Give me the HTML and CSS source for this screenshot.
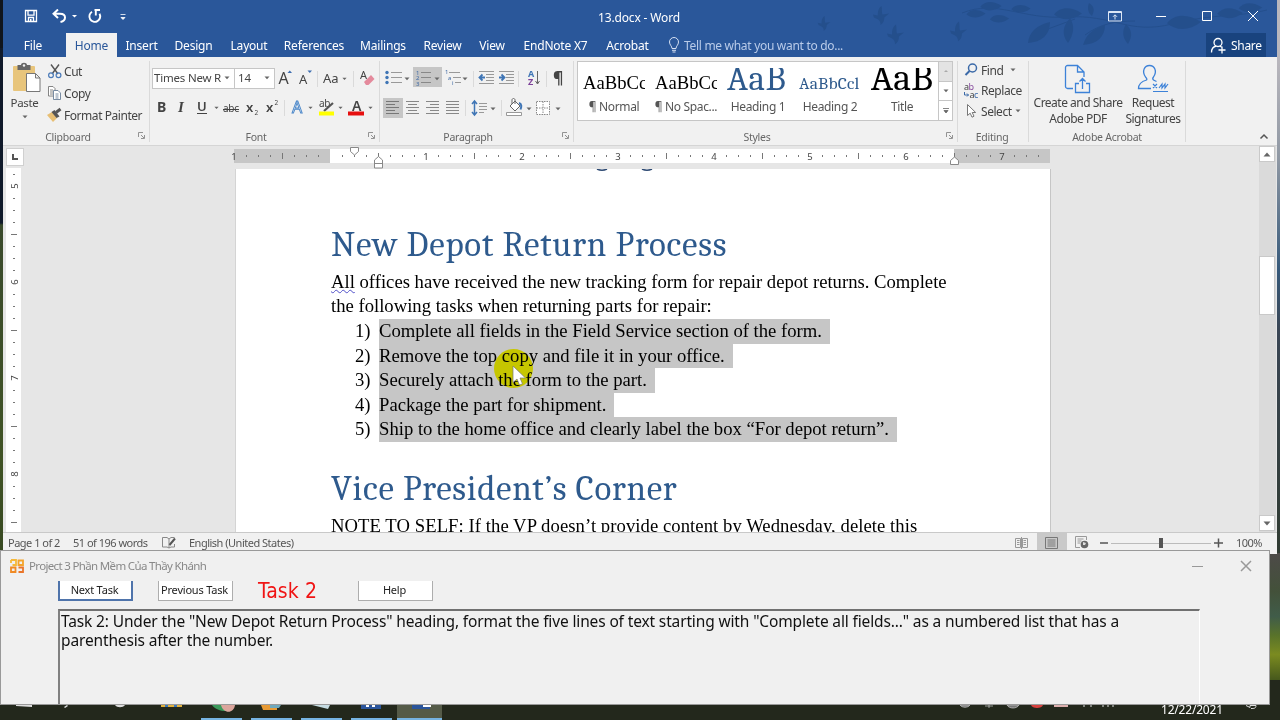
FILE: index.html
```html
<!DOCTYPE html>
<html lang="en">
<head>
  <meta charset="UTF-8">
  <title>13.docx - Word</title>
  <meta name="viewport" content="width=device-width, initial-scale=1">
  <link rel="stylesheet" href="styles.css">
</head>
<body>
  <!-- shared symbols -->
  <svg class="defs" width="0" height="0">
    <symbol id="caret" viewBox="0 0 6 4"><path d="M0.5 0.5h5L3 3.3z" fill="#666"/></symbol>
    <symbol id="launcher" viewBox="0 0 8 8"><path d="M1.500 6V1.500H6M4 4l3 3M7.500 4v3.500H4" fill="none" stroke="#888" stroke-width=".9"/></symbol>
    <symbol id="leaf" viewBox="0 0 30 14"><path d="M0 8C6 0 18-1 30 7C20 15 8 15 0 8z"/></symbol>
    <symbol id="bird" viewBox="0 0 20 20"><path d="M1 9l5 1c0-5 1-8 4-10c1 4 0 6 1 9l7-1-5 4c0 3-1 6-4 8c0-3-1-5-3-6l-4-2z"/></symbol>
  </svg>

  <div class="desktop">
    <div class="edge edge-left"></div>
    <div class="edge edge-right"></div>
    <div class="garden"></div>

    <div class="word">
      <header class="top">
        <svg class="branches" width="480" height="57" viewBox="0 0 480 57">
          <g fill="#214b86">
            <use href="#bird" x="20" y="14" width="15" height="19"/>
            <use href="#bird" x="75" y="4" width="19" height="23"/>
            <use href="#bird" x="89" y="23" width="20" height="23"/>
            <use href="#bird" x="152" y="18" width="20" height="27"/>
            <use href="#leaf" x="168" y="9" width="22" height="9"/>
            <use href="#leaf" x="182" y="1" width="24" height="10"/>
            <use href="#leaf" x="190" y="14" width="25" height="9"/>
            <use href="#leaf" x="212" y="4" width="24" height="9"/>
            <use href="#leaf" x="255" y="7" width="32" height="13"/>
            <use href="#leaf" x="370" y="14" width="34" height="16"/>
            <use href="#leaf" x="418" y="7" width="30" height="12"/>
            <use href="#leaf" x="440" y="2" width="27" height="11"/>
            <path d="M253 22c-13 3-21 10-22 21c14-1 22-8 22-21zM273 18c-7 8-9 16-2 25c6-9 7-17 2-25zM308 25c-13 4-19 10-22 20c14-1 22-8 22-20zM329 24c-4 7-4 13 2 20c5-8 4-14-2-20zM292 3c-2 5-1 10 3 13c3-6 2-10-3-13z"/>
          </g>
          <path d="M165 13c35-14 60 7 105 4s62 18 105 7s62-6 95-14M240 33l38-14M288 35c15-11 30-14 50-14" fill="none" stroke="#214b86"/>
        </svg>
        <div class="titlebar">
          <div class="quick">
            <svg width="26" height="16" viewBox="0 0 26 16"><path d="M2.500 1.500h11v11h-11zM5 1.500v4.700h6V1.500M5.500 12.500v-4h5v4" fill="none" stroke="#fff" stroke-width="1.300"/><path d="M7 10h1.500v2.500H7z" fill="#fff"/></svg>
            <svg width="36" height="16" viewBox="0 0 36 16"><path d="M8 .5L3.500 4.800L8 9M4 4.800h6c3 0 5 1.500 5 3.800c0 2.500-1.700 3.900-4.500 4.500" fill="none" stroke="#fff" stroke-width="2"/><path d="M22 6h5l-2.500 2.600z" fill="#fff"/></svg>
            <svg width="30" height="16" viewBox="0 0 30 16"><path d="M6 2.800a5.400 5.400 0 1 0 7.500 2M8.500 1H14M9.800 1.500v5" fill="none" stroke="#fff" stroke-width="1.900"/></svg>
            <svg width="12" height="16" viewBox="0 0 12 16"><path d="M4.500 5.500h5M5 8.500h4L7 10.500z" stroke="#fff" stroke-width=".8" fill="#fff"/></svg>
          </div>
          <div class="title">13.docx - Word</div>
          <div class="controls">
            <svg width="14" height="12" viewBox="0 0 14 12"><path d="M.5 .5h13v9.500H.5zM.5 1.500h13M7 8.500V4M5 5.800l2-2 2 2" fill="none" stroke="#dce6f5"/></svg>
            <svg width="12" height="12" viewBox="0 0 12 12"><path d="M1 5.500h10" stroke="#fff"/></svg>
            <svg width="12" height="12" viewBox="0 0 12 12"><path d="M1.500 .5h9v9h-9z" fill="none" stroke="#fff"/></svg>
            <svg width="12" height="12" viewBox="0 0 12 12"><path d="M1 0l10 10M11 0L1 10" stroke="#fff"/></svg>
          </div>
        </div>
        <nav class="tabs">
          <span class="tab file">File</span>
          <span class="tab active">Home</span>
          <span class="tab t-insert">Insert</span>
          <span class="tab t-design">Design</span>
          <span class="tab t-layout">Layout</span>
          <span class="tab t-references">References</span>
          <span class="tab t-mailings">Mailings</span>
          <span class="tab t-review">Review</span>
          <span class="tab t-view">View</span>
          <span class="tab t-endnote">EndNote X7</span>
          <span class="tab t-acrobat">Acrobat</span>
          <span class="tell"><svg width="12" height="16" viewBox="0 0 12 16"><path d="M4 11.500C4 9 1.500 8 1.500 5a4.500 4.500 0 0 1 9 0c0 3-2.500 4-2.500 6.500zM4 13.300h4M4.500 15h3" fill="none" stroke="#d5e0f2"/></svg>Tell me what you want to do...</span>
          <span class="share"><svg width="17" height="17" viewBox="0 0 17 17"><circle cx="8" cy="5.500" r="4" fill="none" stroke="#fff" stroke-width="1.300"/><path d="M1.500 15.500c0-4 2-6 5-6.500M9.500 9c1 .2 1.500.6 2 1.200M12 9.500v7M8.500 13h7" fill="none" stroke="#fff" stroke-width="1.300"/></svg>Share</span>
        </nav>
      </header>

      <section class="ribbon">
        <div class="group clipboard">
          <div class="tools clip-tools">
            <div class="paste">
              <svg width="30" height="33" viewBox="0 0 30 33"><rect x="1" y="4" width="22" height="25" rx="1" fill="#e8c57c"/><path d="M5.500 3h3.500c0-3 6-3 6 0h3.500v5h-13z" fill="#666"/><circle cx="12" cy="3.500" r="1.200" fill="#f1f1f1"/><path d="M14.500 11.500h9l4.500 4.500v13.500H14.500zM23.500 11.500V16H28" fill="#fff" stroke="#777"/></svg>
              <span>Paste</span>
              <svg width="6" height="4"><use href="#caret" width="6" height="4"/></svg>
            </div>
            <div class="clip-list">
              <div class="item"><svg width="17" height="16" viewBox="0 0 17 16"><path d="M4 1.500L11 11M12 1.500L5 11" stroke="#555" stroke-width="1.400"/><circle cx="4" cy="12.300" r="2.400" fill="none" stroke="#4a7ab8" stroke-width="1.200"/><circle cx="11.500" cy="12.300" r="2.400" fill="none" stroke="#4a7ab8" stroke-width="1.200"/></svg>Cut</div>
              <div class="item"><svg width="17" height="16" viewBox="0 0 17 16"><path d="M1.500 1.500H6L8 3.500v7.500H1.500zM3 5h3M3 7h3M3 9h3" fill="#fff" stroke="#777" stroke-width=".9"/><path d="M6.500 5.500H11L13.500 8v6.500h-7zM8.500 9h3M8.500 11h3M8.500 13h3" fill="#fff" stroke="#6a7f99" stroke-width=".9"/></svg>Copy</div>
              <div class="item"><svg width="17" height="16" viewBox="0 0 17 16"><path d="M0 8l5-3 5 6-4 4z" fill="#e8bf74"/><path d="M4.500 5l3-2 5 6.500-3 1.500z" fill="#555"/><path d="M9 5.500L13.500 2" stroke="#555" stroke-width="3"/></svg>Format Painter</div>
            </div>
          </div>
          <div class="label"><span>Clipboard</span><svg width="8" height="8"><use href="#launcher"/></svg></div>
        </div>

        <div class="group font">
          <div class="tools">
            <div class="row">
              <div class="combo face">Times New R<svg width="6" height="4"><use href="#caret"/></svg></div>
              <div class="combo size">14<svg width="6" height="4"><use href="#caret"/></svg></div>
              <svg class="tool" width="22" height="24"><text x="3.500" y="17" class="glyph g15">A</text><path d="M12.500 6h4.500l-2.200-2.500z" fill="#3d6db0"/></svg>
              <svg class="tool" width="20" height="24"><text x="2" y="17" class="glyph g13">A</text><path d="M10.500 3.500H15l-2.200 2.500z" fill="#3d6db0"/></svg>
              <svg class="tool" width="40" height="24"><path d="M.5 4v16M36.500 4v16" stroke="#dadada"/><text x="6" y="16" class="glyph g13">Aa</text><use href="#caret" x="25" y="10" width="5" height="4"/></svg>
              <svg class="tool" width="20" height="24"><text x="3" y="12" class="glyph g12">A</text><path d="M7 15l7-7 3.500 4-6 6h-2.500z" fill="#e48a9c"/></svg>
            </div>
            <div class="row">
              <svg class="tool" width="21" height="24"><text x="5" y="16" class="glyph g14 bold">B</text></svg>
              <svg class="tool" width="20" height="24"><text x="5" y="16" class="glyph serif-italic">I</text></svg>
              <svg class="tool" width="29" height="24"><text x="4" y="15" class="glyph g13 heavy">U</text><path d="M4 17.500h10" stroke="#444"/><use href="#caret" x="21" y="10" width="5" height="4"/></svg>
              <svg class="tool" width="22" height="24"><text x="1" y="16" class="glyph g10">abc</text><path d="M1 13.500h16" stroke="#444"/></svg>
              <svg class="tool" width="20" height="24"><text x="2" y="16" class="glyph g13 heavy">x</text><text x="10.500" y="19" class="glyph tiny">2</text></svg>
              <svg class="tool" width="24" height="24"><text x="2" y="16" class="glyph g13 heavy">x</text><text x="10.500" y="9" class="glyph tiny">2</text><path d="M20.500 4v16" stroke="#dadada"/></svg>
              <svg class="tool" width="29" height="24"><text x="4" y="17" class="outline">A</text><use href="#caret" x="20" y="10" width="5" height="4"/></svg>
              <svg class="tool" width="29" height="24"><text x="2" y="11" class="glyph g10">ab</text><path d="M7 15l9-8" stroke="#555" stroke-width="2.200"/><path d="M2 15.500h15v4H2z" fill="#ff0"/><use href="#caret" x="21" y="10" width="5" height="4"/></svg>
              <svg class="tool" width="30" height="24"><text x="6" y="15" class="glyph g14 heavy">A</text><path d="M2 15.500h16v4H2z" fill="#e60f0f"/><use href="#caret" x="22" y="10" width="5" height="4"/></svg>
            </div>
          </div>
          <div class="label"><span>Font</span><svg width="8" height="8"><use href="#launcher"/></svg></div>
        </div>

        <div class="group paragraph">
          <div class="tools">
            <div class="row">
              <svg class="tool" width="29" height="24"><path d="M7 5.500h11M7 10.500h11M7 15.500h11" stroke="#999"/><g fill="#3f75b5"><circle cx="3" cy="5.500" r="1.700"/><circle cx="3" cy="10.500" r="1.700"/><circle cx="3" cy="15.500" r="1.700"/></g><use href="#caret" x="20" y="10" width="6" height="4"/></svg>
              <svg class="tool" width="31" height="24"><path d="M0 0h29v20H0z" fill="#c6c6c6"/><path d="M8 5.500h10M8 10.500h10M8 15.500h10" stroke="#888"/><text x="3" y="7.500" class="num">1</text><text x="3" y="13" class="num">2</text><text x="3" y="18.500" class="num">3</text><use href="#caret" x="21" y="10" width="6" height="4"/></svg>
              <svg class="tool" width="32" height="24"><path d="M5 5.500h11M9 10.500h8M11 15.500h6" stroke="#999"/><text x="1" y="7" class="num">1</text><text x="4" y="12.500" class="num">a</text><text x="8" y="18" class="num">i</text><use href="#caret" x="18" y="10" width="6" height="4"/><path d="M29.500 4v16" stroke="#dadada"/></svg>
              <svg class="tool" width="20" height="24"><path d="M3 4.500h15M10 7.500h8M10 10.500h8M10 13.500h8M3 16.500h15" stroke="#999"/><path d="M9 10.500H4M6.500 7.500l-3 3 3 3" stroke="#3f75b5" stroke-width="1.800" fill="none"/></svg>
              <svg class="tool" width="27" height="24"><path d="M3 4.500h15M10 7.500h8M10 10.500h8M10 13.500h8M3 16.500h15" stroke="#999"/><path d="M3 10.500h5M5.500 7.500l3 3-3 3" stroke="#3f75b5" stroke-width="1.800" fill="none"/><path d="M22.500 4v16" stroke="#dadada"/></svg>
              <svg class="tool" width="26" height="24"><text x="5" y="10" class="sort-a">A</text><text x="5" y="18" class="sort-z">Z</text><path d="M14.500 4v13M12.500 14l2 3 2-3" stroke="#666" fill="none"/><path d="M23.500 4v16" stroke="#dadada"/></svg>
              <svg class="tool" width="20" height="24"><text x="4" y="16" class="glyph g15 bold">¶</text></svg>
            </div>
            <div class="row">
              <svg class="tool" width="21" height="24"><path d="M0 2h20v20H0z" fill="#c6c6c6"/><path d="M3 5.500h13M3 8.500h9M3 11.500h13M3 14.500h9M3 17.500h13" stroke="#777"/></svg>
              <svg class="tool" width="20" height="24"><path d="M2 5.500h13M4 8.500h9M2 11.500h13M4 14.500h9M2 17.500h13" stroke="#888"/></svg>
              <svg class="tool" width="20" height="24"><path d="M2 5.500h13M6 8.500h9M2 11.500h13M6 14.500h9M2 17.500h13" stroke="#888"/></svg>
              <svg class="tool" width="26" height="24"><path d="M2 5.500h13M2 8.500h13M2 11.500h13M2 14.500h13M2 17.500h13" stroke="#888"/><path d="M21.500 4v16" stroke="#dadada"/></svg>
              <svg class="tool" width="36" height="24"><path d="M4.500 6v12M2 8l2.500-3L7 8M2 16l2.500 3L7 16" stroke="#3f75b5" stroke-width="1.500" fill="none"/><path d="M9 7.500h8M9 10.500h8M9 13.500h8M9 16.500h5" stroke="#999"/><use href="#caret" x="20" y="11" width="6" height="4"/><path d="M31.500 4v16" stroke="#dadada"/></svg>
              <svg class="tool" width="30" height="24"><path d="M4 10l5-5 5 5-5 5zM6 8V4c0-2 3-2 3 0v4" fill="#fff" stroke="#666"/><path d="M13 7c3 1 2.500 4 1.500 6.500" stroke="#3f75b5" stroke-width="2" fill="none"/><path d="M.5 16.500h15v3h-15z" fill="#fff" stroke="#999"/><use href="#caret" x="20" y="11" width="6" height="4"/></svg>
              <svg class="tool" width="30" height="24"><path d="M.5 5.500h13v13H.5zM7 5.500v13M.5 12h13" fill="#fff" stroke="#888" stroke-dasharray="1.500 1"/><use href="#caret" x="19" y="11" width="6" height="4"/></svg>
            </div>
          </div>
          <div class="label"><span>Paragraph</span><svg width="8" height="8"><use href="#launcher"/></svg></div>
        </div>

        <div class="group styles">
          <div class="gallery">
            <div class="style"><span class="sample times">AaBbCc</span><span>¶ Normal</span></div>
            <div class="style"><span class="sample times">AaBbCc</span><span>¶ No Spac...</span></div>
            <div class="style"><span class="sample h1s">AaB</span><span>Heading 1</span></div>
            <div class="style"><span class="sample h2s">AaBbCcl</span><span>Heading 2</span></div>
            <div class="style"><span class="sample titles">AaB</span><span>Title</span></div>
            <div class="scroller">
              <span class="off"><svg width="6" height="4" viewBox="0 0 6 4"><path d="M1 3h4L3 1z" fill="#aaa"/></svg></span>
              <span><svg width="6" height="4"><use href="#caret"/></svg></span>
              <span><svg width="6" height="6" viewBox="0 0 6 6"><path d="M0 .5h6M1 2.500h4L3 5z" stroke="#666" stroke-width=".8" fill="#666"/></svg></span>
            </div>
          </div>
          <div class="label"><span>Styles</span><svg width="8" height="8"><use href="#launcher"/></svg></div>
        </div>

        <div class="group editing">
          <div class="tools edit-list">
            <div class="item"><svg width="17" height="16" viewBox="0 0 17 16"><circle cx="8.500" cy="6" r="4" fill="none" stroke="#3b6aa8" stroke-width="1.500"/><path d="M5.500 9L1.500 13" stroke="#3b6aa8" stroke-width="2"/></svg>Find<svg class="drop" width="6" height="4"><use href="#caret"/></svg></div>
            <div class="item"><svg width="17" height="16" viewBox="0 0 17 16"><text x="0" y="7" class="ab">a<tspan fill="#8a4fa0">b</tspan></text><text x="5.500" y="14.500" class="ab">a<tspan fill="#3b6aa8">c</tspan></text><path d="M.5 9v3h4M3 10.500l1.500 1.500L3 13.500" fill="none" stroke="#3b6aa8"/></svg>Replace</div>
            <div class="item"><svg width="17" height="16" viewBox="0 0 17 16"><path d="M3.500 1.500v11l2.700-2.300 1.800 4 2-1-1.800-3.700h3.500z" fill="#fff" stroke="#777"/></svg>Select<svg class="drop near" width="6" height="4"><use href="#caret"/></svg></div>
          </div>
          <div class="label"><span>Editing</span></div>
        </div>

        <div class="group acrobat">
          <div class="tools adobe">
            <div class="big create"><svg width="28" height="30" viewBox="0 0 28 30"><path d="M9 24.500H3.500c-1 0-2-1-2-2v-19c0-1 1-2 2-2h10L20 8v5M13.500 1.500V8H20" fill="none" stroke="#3d82d8" stroke-width="1.300"/><path d="M15 19.500h-3.500v9h14v-9H22M18.500 25V14.500M15.500 17.500l3-3 3 3" fill="none" stroke="#3d82d8" stroke-width="1.300"/></svg><span>Create and Share<br>Adobe PDF</span></div>
            <div class="big request"><svg width="32" height="30" viewBox="0 0 32 30"><path d="M14 24.500H1.500c0-5 3-7 8-8.500c1-1 0-2-1-3c-4-6-1-11.500 4-11.500s8 5.500 4 11.500c-1 1-1 2 0 3l3 1.500" fill="none" stroke="#3d82d8" stroke-width="1.300"/><path d="M16 20l4 4M20 20l-4 4M22 24l3-4v4l3-4v4l3-4M16 27.500h15" fill="none" stroke="#3d82d8" stroke-width="1.200"/></svg><span>Request<br>Signatures</span></div>
          </div>
          <div class="label"><span>Adobe Acrobat</span></div>
        </div>
        <svg class="collapse" width="10" height="7" viewBox="0 0 10 7"><path d="M1.500 5.500L5 2l3.500 3.500" fill="none" stroke="#555" stroke-width="1.500"/></svg>
      </section>

      <main class="workspace">
        <div class="left-rail">
          <div class="tabstop"><svg width="8" height="8" viewBox="0 0 8 8"><path d="M2 1v5h5" fill="none" stroke="#555" stroke-width="2"/></svg></div>
          <svg class="vruler" width="15" height="364" viewBox="0 168 15 364">
            <defs><pattern id="vticks" width="15" height="96" y="186" patternUnits="userSpaceOnUse"><path d="M7 12.500h2M7 24.500h2M7 36.500h2M5 48.500h6M7 60.500h2M7 72.500h2M7 84.500h2" stroke="#777"/></pattern></defs>
            <rect y="168" width="15" height="364" fill="url(#vticks)"/>
            <g class="rulenum">
              <text transform="translate(12 186) rotate(-90)">5</text>
              <text transform="translate(12 282) rotate(-90)">6</text>
              <text transform="translate(12 378) rotate(-90)">7</text>
              <text transform="translate(12 474) rotate(-90)">8</text>
            </g>
          </svg>
        </div>
        <div class="canvas">
          <svg class="hruler" width="820" height="23" viewBox="232 146 820 23">
            <defs><pattern id="hticks" width="96" height="23" x="234" y="146" patternUnits="userSpaceOnUse"><path d="M12.500 9v2M24.500 9v2M36.500 9v2M48.500 7v6M60.500 9v2M72.500 9v2M84.500 9v2" stroke="#777"/></pattern></defs>
            <path d="M234 149h816v14H234z" fill="#c6c6c6"/>
            <path d="M330 149h624v14H330z" fill="#fff"/>
            <rect x="234" y="146" width="816" height="23" fill="url(#hticks)"/>
            <g class="rulenum">
              <text x="234" y="160">1</text><text x="426" y="160">1</text><text x="522" y="160">2</text><text x="618" y="160">3</text><text x="714" y="160">4</text><text x="810" y="160">5</text><text x="906" y="160">6</text><text x="1002" y="160">7</text>
            </g>
            <path d="M350.500 147.500h8v4l-4 3.500-4-3.500zM374.500 168v-8l4-3.500 4 3.500v8zM374.500 163.500h8M950.500 164.500v-4l4-3.500 4 3.500v4z" fill="#fff" stroke="#888"/>
          </svg>
          <article class="page">
            <!-- descenders of the heading scrolled off the top -->
            <svg class="cutoff" width="80" height="3" viewBox="0 0 80 3"><path d="M1 0c3 1.500 7 1.500 10 0M46 0c3 1.500 7 1.500 10 0" fill="none" stroke="#2e4a73" stroke-width="1.500"/></svg>
            <h1 class="h-depot">New Depot Return Process</h1>
            <p><span class="grammar">All</span> offices have received the new tracking form for repair depot returns. Complete<br>the following tasks when returning parts for repair:</p>
            <ol>
              <li><span>Complete all fields in the Field Service section of the form.</span></li>
              <li><span>Remove the top copy and file it in your office.</span></li>
              <li><span>Securely attach the form to the part.</span></li>
              <li><span>Package the part for shipment.</span></li>
              <li><span>Ship to the home office and clearly label the box “For depot return”.</span></li>
            </ol>
            <h1 class="h-vice">Vice President’s Corner</h1>
            <p class="note-self">NOTE TO SELF: If the VP doesn’t provide content by Wednesday, delete this</p>
          </article>
        </div>
        <div class="scrollbar">
          <span class="arrow"><svg width="8" height="5" viewBox="0 0 8 5"><path d="M.5 4.500h7L4 .5z" fill="#666"/></svg></span>
          <span class="thumb"></span>
          <span class="arrow last"><svg width="8" height="5" viewBox="0 0 8 5"><path d="M.5.5h7L4 4.500z" fill="#666"/></svg></span>
        </div>
      </main>

      <footer class="status">
        <span class="s-page">Page 1 of 2</span>
        <span class="s-words">51 of 196 words</span>
        <svg class="s-proof" width="15" height="13" viewBox="0 0 15 13"><path d="M.5 1.500H5L7 3v9l-2-1H.5zM7 3l2-1.500h3.500M7 12l2-1h3.500V8" fill="none" stroke="#888"/><path d="M7.500 9L13 2.500" stroke="#555" stroke-width="2"/></svg>
        <span class="s-lang">English (United States)</span>
        <div class="views">
          <span class="view"><svg width="13" height="12" viewBox="0 0 13 12"><path d="M.5 1.500h5v9h-5zM7.500 1.500h5v9h-5zM6.500 0v12M2 3.500h2.500M2 5.500h2.500M2 7.500h2.500M8.500 3.500H11M8.500 5.500H11M8.500 7.500H11" fill="none" stroke="#999"/></svg></span>
          <span class="view on"><svg width="13" height="12" viewBox="0 0 13 12"><path d="M.5.5h12v11H.5zM2.500 3h8M2.500 5h8M2.500 7h8M2.500 9h8" fill="none" stroke="#777"/></svg></span>
          <span class="view"><svg width="14" height="13" viewBox="0 0 14 13"><path d="M11.500 4V.5H.5v11H5M2.500 3h6M2.500 5h4M2.500 7h3" fill="none" stroke="#999"/><circle cx="9.500" cy="8.500" r="3.800" fill="#666"/><path d="M8 6l3 1-1 2-2 0zM10 10l2-1" fill="#ddd"/></svg></span>
        </div>
        <svg class="zoom" width="124" height="12" viewBox="0 0 124 12"><path d="M0 6h8M114 6h9M118.500 1.500v9" stroke="#555" stroke-width="1.500"/><path d="M11 6.500h100" stroke="#bbb"/><path d="M59 1h4v10h-4z" fill="#555"/></svg>
        <span class="s-zoom">100%</span>
      </footer>
    </div>

    <div class="taskwin">
      <div class="tw-title">
        <svg width="16" height="16" viewBox="0 0 16 16"><g fill="none" stroke-width="1.800"><path d="M2 2h5v5H3.500M2 2v3" stroke="#f5b93a"/><path d="M9.500 2.500H14V7H9.500z" stroke="#f3a42c"/><path d="M2 9.500h4.500V14H2z" stroke="#f08a24"/><path d="M9.500 9.500H14V14H9.500" stroke="#e9752a"/></g></svg>
        <span>Project 3 Phần Mềm Của Thầy Khánh</span>
        <svg class="tw-controls" width="60" height="14" viewBox="0 0 60 14"><path d="M0 7.500h11" stroke="#999"/><path d="M49 2l10 10M59 2L49 12" stroke="#999" stroke-width="1.500"/></svg>
      </div>
      <div class="tw-buttons">
        <button class="primary">Next Task</button>
        <button>Previous Task</button>
        <span class="task-no">Task 2</span>
        <button>Help</button>
      </div>
      <div class="tw-text">Task 2: Under the "New Depot Return Process" heading, format the five lines of text starting with "Complete all fields..." as a numbered list that has a<br>parenthesis after the number.</div>
    </div>

    <div class="taskbar">
      <svg width="1150" height="15" viewBox="0 705 1150 15">
        <path d="M397 705h45v15h-45z" fill="#555b48"/>
        <path d="M16 705h16v2l-16-1zM64 707l3-2 1 1-3 2zM115 705h10c-2 3-8 3-10 0z" fill="#ddd"/>
        <path d="M161 705h21v2h-21z" fill="#e2b23d"/><path d="M165 705h3v2h-3zM174 705h3v2h-3z" fill="#3d78b8"/>
        <path d="M212 705h12l2 6c-6 0-11-2-14-6z" fill="#3c9a5c"/><path d="M221 705h14c-1 9-12 9-14 0z" fill="#dba69d"/>
        <path d="M261 705h16v5h-14z" fill="#e79a34"/><path d="M270 705h11l-2 3h-9z" fill="#6fa9bd"/>
        <path d="M312 705h18l-2 4z" fill="#c6dce2"/><path d="M361 705h20v4h-20zM412 705h18v4h-18z" fill="#2b559b"/><path d="M366 705h3v2h-3zM372 705h3v2h-3zM423 705h8v2h-8z" fill="#fff"/>
        <path d="M201 718h41v2h-41zM251 718h41v2h-41zM301 718h41v2h-41zM351 718h41v2h-41zM397 718h45v2h-45z" fill="#76b4e3"/>
        <path d="M960 705h10c-2 3-8 3-10 0zM985 706h8M989 705v3M1007 705h12c-2 4-10 4-12 0z" fill="#777" stroke="#ccc" stroke-width=".7"/>
        <path d="M1031 705h12c-1 4-11 4-12 0z" fill="#d8423f"/><path d="M1054 705h14v2h-14z" fill="#ddb0ae"/>
        <path d="M1083 706h2M1090 706h2M1103 705v2M1108 705v2M1113 705v2" stroke="#ddd"/>
      </svg>
      <span class="date">12/22/2021</span>
      <svg class="note" width="14" height="5" viewBox="0 0 14 5"><path d="M1 .5l4 2v-2h6c0 3-2 3-5 3" fill="none" stroke="#ddd"/></svg>
    </div>

    <!-- pointer with its highlight spot -->
    <div class="spot"></div>
    <svg class="pointer" width="16" height="22" viewBox="0 0 16 22"><path d="M1 1v16.500l4-3.500 2.500 6 3-1.200-2.500-5.800h5.500z" fill="#fff" stroke="#777" stroke-width=".7"/></svg>
  </div>
</body>
</html>
```
FILE: styles.css
```css
* {
  box-sizing: border-box;
}

body {
  margin: 0;
  width: 1280px;
  height: 720px;
  overflow: hidden;
  font-family: "Noto Sans", "Open Sans", sans-serif;
  font-size: 12px;
  color: #444;
}

svg {
  display: block;
  flex: none;
}

.defs {
  position: absolute;
}

.desktop {
  position: relative;
  width: 1280px;
  height: 720px;
  overflow: hidden;
  background: #23281c;
}

.edge {
  position: absolute;
  top: 0;
  width: 4px;
  height: 680px;
}

.edge-left {
  left: 0;
  background: linear-gradient(#10151c 0 48px, #101a2a 48px 223px, #3a4a2c 225px, #405325 460px, #2c3b1c);
}

.edge-right {
  right: 0;
  background: linear-gradient(#b9b7bd 0 60px, #8e97a3 160px, #36597a 270px, #3a4655 330px, #303b32 550px);
}

.garden {
  position: absolute;
  left: 1270px;
  top: 553px;
  width: 10px;
  height: 127px;
  background: linear-gradient(#4d4a48, #43513a 30%, #405c49 50%, #59732a 65%, #7b8b20 80%, #46581c);
}

/* word window */
.word {
  position: absolute;
  left: 3px;
  top: 0;
  width: 1274px;
  height: 554px;
  display: flex;
  flex-direction: column;
  background: #e6e6e6;
}

.top {
  position: relative;
  height: 57px;
  background: #2a579a;
  color: #fff;
}

.branches {
  position: absolute;
  right: 0;
  top: 0;
  opacity: .65;
}

.titlebar {
  position: relative;
  display: flex;
  align-items: center;
  height: 33px;
}

.quick {
  display: flex;
  width: 460px;
  padding-left: 20px;
}

.quick svg:nth-child(2) {
  margin-left: 1px;
}

.title {
  width: 352px;
  text-align: center;
  padding-top: 2px;
  letter-spacing: -.15px;
}

.controls {
  display: flex;
  align-items: center;
  gap: 34px;
  margin-left: auto;
  padding-right: 18px;
}

.controls svg:first-child {
  margin-right: -1px;
}

.tabs {
  position: relative;
  display: flex;
  height: 24px;
  line-height: 25px;
}

.tab {
  flex: none;
  height: 24px;
  text-align: center;
  letter-spacing: -.2px;
}

.file {
  width: 60px;
}

.active {
  width: 51px;
  margin-left: 3px;
  background: #f1f1f1;
  color: #2a579a;
}

.t-insert { width: 49px; }
.t-design { width: 55px; }
.t-layout { width: 56px; }
.t-references { width: 74px; }
.t-mailings { width: 64px; }
.t-review { width: 55px; }
.t-view { width: 44px; }
.t-endnote { width: 83px; }
.t-acrobat { width: 61px; }

.tell {
  display: flex;
  align-items: center;
  gap: 4px;
  margin-left: 10px;
  color: #b9cbe9;
  letter-spacing: -.3px;
}

.share {
  display: flex;
  align-items: center;
  gap: 4px;
  width: 60px;
  margin-left: auto;
  margin-right: 11px;
  padding-left: 4px;
  background: #19437e;
  letter-spacing: -.3px;
}

/* ribbon */
.ribbon {
  display: flex;
  height: 89px;
  padding-top: 4px;
  background: #f1f1f1;
  border-bottom: 1px solid #d5d5d5;
}

.group {
  display: flex;
  flex-direction: column;
  height: 81px;
  border-right: 1px solid #dadada;
}

.clipboard { width: 147px; }
.font { width: 230px; }
.paragraph { width: 194px; }
.styles { width: 384px; }
.editing { width: 71px; }
.acrobat { width: 157px; }

.tools {
  height: 67px;
}

.label {
  display: flex;
  align-items: center;
  height: 14px;
  padding-right: 4px;
  font-size: 10.5px;
  color: #666;
  letter-spacing: -.25px;
}

.label span {
  flex: 1;
  padding-top: 3px;
  text-align: center;
}

.acrobat .label span {
  padding-left: 4px;
}

.editing .label span {
  padding-left: 2px;
}

.clipboard .label span {
  padding-right: 4px;
}

.font .label span,
.paragraph .label span,
.styles .label span {
  padding-right: 5px;
}

.row {
  display: flex;
  align-items: center;
  height: 29px;
}

.font .row {
  padding-left: 2px;
}

.font .row:first-child,
.paragraph .row:first-child {
  margin-top: 3px;
}

.paragraph .row {
  padding-left: 4px;
}

.paragraph .row:last-child {
  padding-left: 3px;
}

.clip-tools {
  display: flex;
}

.paste {
  display: flex;
  flex-direction: column;
  align-items: center;
  width: 43px;
  padding-top: 1px;
}

.paste svg:first-child {
  margin-left: 5px;
}

.paste span {
  margin: 0 0 4px;
  font-size: 11.5px;
  line-height: 16px;
  letter-spacing: -.3px;
}

.clip-list {
  display: flex;
  flex-direction: column;
  margin-top: -1px;
}

.item {
  display: flex;
  align-items: center;
  height: 22px;
  letter-spacing: -.45px;
  white-space: nowrap;
}

.clip-list .item {
  padding-left: 1px;
}

.combo {
  display: flex;
  flex: none;
  align-items: center;
  justify-content: space-between;
  height: 21px;
  padding: 0 4px 2px 1px;
  background: #fff;
  border: 1px solid #c6c6c6;
  font-size: 11.5px;
  letter-spacing: -.2px;
}

.combo svg {
  margin-left: -2px;
}

.face {
  width: 83px;
}

.size {
  width: 41px;
  margin-left: -1px;
  padding-left: 3px;
}

.glyph {
  fill: #444;
}

.g10 { font-size: 10px; letter-spacing: -.3px; }
.g12 { font-size: 11px; }
.g13 { font-size: 13px; }
.g14 { font-size: 14px; }
.g15 { font-size: 16px; }
.bold { font-weight: bold; }
.heavy { font-weight: 600; }
.tiny { font-size: 6.5px; }

.serif-italic {
  font: italic bold 15px "Liberation Serif", serif;
}

.outline {
  font-size: 16px;
  fill: #fff;
  stroke: #4a86c8;
  stroke-width: .9px;
}

.num {
  font-size: 6px;
  fill: #3f6aa5;
}

.sort-a,
.sort-z {
  font-size: 9px;
  font-weight: bold;
  fill: #3f75b5;
}

.sort-z {
  fill: #7d4199;
}

.ab {
  font-size: 9px;
  fill: #444;
}

/* style gallery */
.gallery {
  display: flex;
  width: 376px;
  height: 60px;
  margin: 0 0 7px 3px;
  background: #fff;
  border: 1px solid #c6c6c6;
}

.style {
  display: flex;
  flex-direction: column;
  align-items: center;
  width: 72px;
  padding-top: 6px;
  color: #555;
  font-size: 12px;
  line-height: 16px;
  letter-spacing: -.35px;
  white-space: nowrap;
}

.sample {
  width: 62px;
  height: 25px;
  margin-bottom: 6px;
  overflow: hidden;
  line-height: 29px;
  letter-spacing: 0;
}

.times {
  font-family: "Liberation Serif", serif;
  font-size: 18.67px;
  color: #000;
}

.h1s,
.h2s,
.titles {
  font-family: Cambria, Caladea, "DejaVu Serif Condensed", "DejaVu Serif", serif;
  color: #2e5a8d;
}

.h1s {
  width: 62px;
  font-size: 35px;
  line-height: 22px;
  letter-spacing: .6px;
}

.h2s {
  width: 62px;
  font-size: 17.5px;
  line-height: 30px;
  letter-spacing: .2px;
}

.titles {
  width: 63px;
  font-size: 38px;
  line-height: 21px;
  color: #000;
}

.scroller {
  display: flex;
  flex-direction: column;
  width: 14px;
  border-left: 1px solid #c6c6c6;
}

.scroller span {
  display: flex;
  flex: 1;
  align-items: center;
  justify-content: center;
  border-top: 1px solid #c6c6c6;
}

.scroller .off {
  border-top: 0;
  background: #e3e3e3;
}

.edit-list {
  margin-top: -1px;
  height: 68px;
  padding: 0 0 0 5px;
}

.edit-list .item {
  height: 20.5px;
  padding-left: 1px;
}

.drop {
  margin-left: 7px;
}

.near {
  margin-left: 3px;
}

.adobe {
  display: flex;
}

.big {
  display: flex;
  flex-direction: column;
  align-items: center;
  padding-top: 3px;
  text-align: center;
  font-size: 12px;
  line-height: 16px;
  letter-spacing: -.5px;
  white-space: nowrap;
}

.create { width: 98px; }
.request { width: 52px; }

.big svg {
  margin-bottom: 1px;
}

.collapse {
  align-self: flex-end;
  margin: 0 8px 5px auto;
}

/* document area */
.workspace {
  display: flex;
  height: 386px;
  overflow: hidden;
}

.left-rail {
  width: 22px;
  padding-left: 3px;
}

.tabstop {
  display: flex;
  align-items: center;
  justify-content: center;
  width: 18px;
  height: 18px;
  margin: 2px 0 2px;
  background: #fff;
  border: 1px solid #d0d0d0;
}

.vruler {
  background: #fff;
}

.rulenum {
  font-family: "Noto Sans", sans-serif;
  font-size: 9.5px;
  fill: #444;
  text-anchor: middle;
}

.canvas {
  width: 1234px;
  padding-left: 207px;
}

.hruler {
  height: 23px;
}

.page {
  width: 816px;
  height: 370px;
  margin-left: 3px;
  padding: 0 0 0 95px;
  background: #fff;
  border-left: 1px solid #d4d4d4;
  border-right: 1px solid #c6c6c6;
  color: #000;
  font-family: "Liberation Serif", "Times New Roman", serif;
  font-size: 18.67px;
  line-height: 24.6px;
  white-space: nowrap;
}

.cutoff {
  margin-left: 265px;
}

.page h1 {
  height: 48px;
  margin: 0;
  font-family: Cambria, Caladea, "DejaVu Serif Condensed", "DejaVu Serif", serif;
  font-size: 35px;
  font-weight: normal;
  line-height: 46px;
  letter-spacing: .75px;
  color: #2e5a8d;
}

.page .h-depot {
  margin-top: 49.9px;
}

.page .h-vice {
  margin-top: 23.8px;
  letter-spacing: .68px;
}

.page p {
  margin: 0;
}

.page .note-self {
  letter-spacing: .06px;
}

.grammar {
  text-decoration: underline wavy #5050c8 1px;
  text-underline-offset: 1px;
}

.page ol {
  margin: 0;
  padding: 0;
  list-style: none;
  counter-reset: step;
}

.page li {
  display: flex;
  height: 24.6px;
}

.page li::before {
  counter-increment: step;
  content: counter(step) ")";
  width: 24px;
  margin-left: 24px;
}

.page li span {
  padding-right: 8px;
  background: #c6c6c6;
}

.scrollbar {
  display: flex;
  flex-direction: column;
  width: 17px;
  margin-right: 1px;
  background: #dadada;
}

.arrow,
.thumb {
  display: flex;
  align-items: center;
  justify-content: center;
  width: 16px;
  height: 16px;
  background: #fff;
  border: 1px solid #c9c9c9;
}

.thumb {
  height: 59px;
  margin-top: 94px;
}

.last {
  margin: auto 0 1px;
}

.status {
  display: flex;
  align-items: center;
  height: 22px;
  padding: 0 15px 2px 5px;
  background: #f1f1f1;
  border-top: 1px solid #c9c9c9;
  font-size: 11px;
  letter-spacing: -.5px;
  color: #555;
}

.s-page { width: 65px; }
.s-words { width: 89px; }
.s-lang { margin-left: 12px; }

.views {
  display: flex;
  height: 20px;
  margin-left: auto;
}

.view {
  display: flex;
  align-items: center;
  justify-content: center;
  width: 30px;
}

.on {
  background: #c9c9c9;
}

.zoom {
  margin: 0 12px 0 3px;
}

/* task window */
.taskwin {
  position: absolute;
  left: 0;
  top: 550px;
  width: 1270px;
  height: 155px;
  background: #f0f0f0;
  border: 1px solid #999;
  font-family: "DejaVu Sans Condensed", "Noto Sans", sans-serif;
  color: #111;
}

.tw-title {
  display: flex;
  align-items: center;
  height: 30px;
  padding: 0 17px 0 8px;
  font-family: "Noto Sans", sans-serif;
  font-size: 11.5px;
  letter-spacing: -.66px;
  color: #888;
}

.tw-title span {
  margin: -2px 0 0 4px;
}

.tw-controls {
  margin-left: auto;
}

.tw-buttons {
  display: flex;
  height: 20px;
  padding-left: 57px;
}

.tw-buttons button {
  width: 75px;
  height: 20px;
  padding: 0 2px 2px 0;
  background: #fff;
  border: 1px solid #adadad;
  border-top: 0;
  font-family: "Noto Sans", sans-serif;
  font-size: 11px;
  letter-spacing: -.2px;
  color: #222;
}

.tw-buttons .primary {
  margin-right: 25px;
  padding-bottom: 1px;
  border: 2px solid #4f74ab;
  border-top: 0;
}

.task-no {
  width: 125px;
  padding-left: 25px;
  font-size: 21px;
  line-height: 20px;
  letter-spacing: .1px;
  color: #f01414;
}

.tw-text {
  width: 1142px;
  height: 95px;
  margin: 8px 0 0 57px;
  padding: 1px 0 0 1px;
  border-top: 2px solid #707070;
  border-left: 2px solid #808080;
  border-right: 1px solid #fff;
  font-family: "Noto Sans", sans-serif;
  font-size: 15.5px;
  letter-spacing: -.14px;
  line-height: 19px;
  white-space: nowrap;
}

.taskbar {
  position: absolute;
  left: 0;
  top: 705px;
  display: flex;
  width: 1280px;
  height: 15px;
  color: #fff;
}

.date {
  margin-left: 11px;
  line-height: 9px;
  letter-spacing: -.2px;
}

.note {
  margin-left: 22px;
}

.spot {
  position: absolute;
  left: 494px;
  top: 349px;
  width: 39px;
  height: 39px;
  border-radius: 50%;
  background: #ffff00;
  mix-blend-mode: multiply;
}

.pointer {
  position: absolute;
  left: 512px;
  top: 365px;
}
```
